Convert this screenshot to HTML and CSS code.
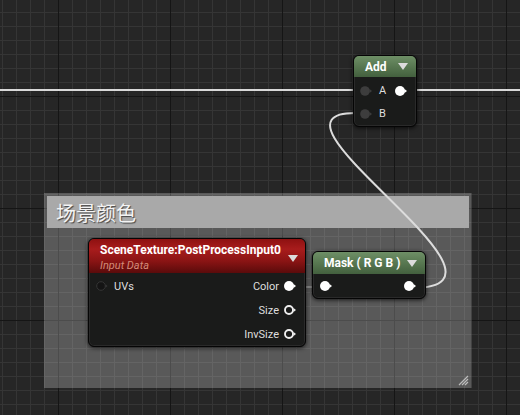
FILE: index.html
```html
<!DOCTYPE html>
<html>
<head>
<meta charset="utf-8">
<link rel="stylesheet" href="styles.css">
</head>
<body>
<div class="graph">
  <div class="comment">
    <div class="comment-header">场景颜色</div>
    <svg class="grip" width="12" height="12" viewBox="0 0 12 12">
      <path d="M11 2 L2 11 M11 5 L5 11 M11 8 L8 11" stroke="#bdbdbd" stroke-width="1.2" fill="none"/>
    </svg>
  </div>

  <svg class="wires" width="520" height="415" viewBox="0 0 520 415">
    <path d="M0 90 L356 90" stroke="#d9d9d9" stroke-width="2" fill="none"/>
    <path d="M404 90 L520 90" stroke="#d9d9d9" stroke-width="2" fill="none"/>
    <path d="M412 288 C 542 288, 245 113, 355 113" stroke="#dcdcdc" stroke-width="2" fill="none"/>
    <path d="M292 287 L325 287" stroke="#bcbcbc" stroke-width="1" fill="none"/>
  </svg>

  <div class="node node-add">
    <div class="node-head head-green">
      <span class="title">Add</span>
      <span class="drop"></span>
    </div>
    <div class="node-body">
      <div class="row">
        <div class="pin-in">
          <svg class="pin" width="14" height="12" viewBox="0 0 14 12"><circle cx="6" cy="6" r="4.8" fill="#3d3d3d"/><path d="M10.5 4 L13 6 L10.5 8Z" fill="#3d3d3d"/></svg>
          <span class="label">A</span>
        </div>
        <svg class="pin" width="14" height="12" viewBox="0 0 14 12"><circle cx="6" cy="6" r="5" fill="#ffffff"/><path d="M10.5 4 L13 6 L10.5 8Z" fill="#ffffff"/></svg>
      </div>
      <div class="row">
        <div class="pin-in">
          <svg class="pin" width="14" height="12" viewBox="0 0 14 12"><circle cx="6" cy="6" r="4.8" fill="#3d3d3d"/><path d="M10.5 4 L13 6 L10.5 8Z" fill="#3d3d3d"/></svg>
          <span class="label">B</span>
        </div>
      </div>
    </div>
  </div>

  <div class="node node-scene">
    <div class="node-head head-red">
      <div class="titles">
        <span class="title">SceneTexture:PostProcessInput0</span>
        <span class="subtitle">Input Data</span>
      </div>
      <span class="drop"></span>
    </div>
    <div class="node-body">
      <div class="row">
        <div class="pin-in">
          <svg class="pin" width="14" height="12" viewBox="0 0 14 12"><circle cx="6" cy="6" r="4.3" fill="#141414" stroke="#353535" stroke-width="1"/><path d="M10.5 4.2 L12.6 6 L10.5 7.8Z" fill="#353535"/></svg>
          <span class="label">UVs</span>
        </div>
        <div class="pin-out">
          <span class="label">Color</span>
          <svg class="pin" width="14" height="12" viewBox="0 0 14 12"><circle cx="6" cy="6" r="5" fill="#ffffff"/><path d="M10.5 4 L13 6 L10.5 8Z" fill="#ffffff"/></svg>
        </div>
      </div>
      <div class="row row-right">
        <div class="pin-out">
          <span class="label">Size</span>
          <svg class="pin" width="14" height="12" viewBox="0 0 14 12"><circle cx="6" cy="6" r="4" fill="none" stroke="#eeeeee" stroke-width="1.9"/><path d="M10.5 4 L13 6 L10.5 8Z" fill="#eeeeee"/></svg>
        </div>
      </div>
      <div class="row row-right">
        <div class="pin-out">
          <span class="label">InvSize</span>
          <svg class="pin" width="14" height="12" viewBox="0 0 14 12"><circle cx="6" cy="6" r="4" fill="none" stroke="#eeeeee" stroke-width="1.9"/><path d="M10.5 4 L13 6 L10.5 8Z" fill="#eeeeee"/></svg>
        </div>
      </div>
    </div>
  </div>

  <div class="node node-mask">
    <div class="node-head head-green">
      <span class="title">Mask ( R G B )</span>
      <span class="drop"></span>
    </div>
    <div class="node-body">
      <div class="row">
        <svg class="pin" width="14" height="12" viewBox="0 0 14 12"><circle cx="6" cy="6" r="5" fill="#ffffff"/><path d="M10.5 4 L13 6 L10.5 8Z" fill="#ffffff"/></svg>
        <svg class="pin" width="14" height="12" viewBox="0 0 14 12"><circle cx="6" cy="6" r="5" fill="#ffffff"/><path d="M10.5 4 L13 6 L10.5 8Z" fill="#ffffff"/></svg>
      </div>
    </div>
  </div>
</div>
</body>
</html>
```

FILE: styles.css
```css
html, body {
  margin: 0;
  padding: 0;
  background: #262626;
}

.graph {
  position: relative;
  width: 520px;
  height: 415px;
  overflow: hidden;
  font-family: Roboto, "Liberation Sans", sans-serif;
  background-color: #262626;
  background-image:
    linear-gradient(to right, #151515 1px, transparent 1px),
    linear-gradient(to bottom, #151515 1px, transparent 1px),
    linear-gradient(to right, #353535 1px, transparent 1px),
    linear-gradient(to bottom, #353535 1px, transparent 1px);
  background-size: 112px 112px, 112px 112px, 14px 14px, 14px 14px;
  background-position: 58px 0, 0 96px, 2px 0, 0 12px;
}

.comment {
  position: absolute;
  left: 44px;
  top: 193px;
  width: 428px;
  height: 195px;
  box-sizing: border-box;
  padding: 3px 2px 0 3px;
  background: rgba(255, 255, 255, 0.235);
  border-right: 1px solid rgba(0, 0, 0, 0.25);
  z-index: 1;
}

.comment-header {
  height: 32px;
  background: #a9a9a9;
  display: flex;
  align-items: center;
  padding-left: 9px;
  font-family: "Noto Sans CJK SC", "Noto Sans", sans-serif;
  font-size: 20px;
  color: #f4f4f4;
  text-shadow: 1px 1px 1px rgba(0, 0, 0, 0.6);
}

.grip {
  position: absolute;
  right: 2px;
  bottom: 2px;
}

.wires {
  position: absolute;
  left: 0;
  top: 0;
  z-index: 2;
}

.node {
  position: absolute;
  z-index: 3;
  box-sizing: border-box;
  display: flex;
  flex-direction: column;
  background: #1a1b1a;
  border: 1px solid #050505;
  border-radius: 6px;
  overflow: hidden;
  box-shadow: 0 1px 4px rgba(0, 0, 0, 0.75), inset 0 0 0 1px #2a2a2a;
  color: #dddddd;
}

.node-head {
  display: flex;
  align-items: center;
  justify-content: space-between;
  box-sizing: border-box;
}

.head-green {
  background: linear-gradient(to bottom, #6e8f66 0%, #5a7a53 45%, #43603e 100%);
}

.head-red {
  background: linear-gradient(to bottom, #8e1111 0%, #a81c1c 30%, #8a1414 65%, #5a0b0b 100%);
  align-items: flex-start;
}

.title {
  font-weight: bold;
  font-size: 12px;
  color: #ffffff;
  white-space: nowrap;
}

.titles {
  display: flex;
  flex-direction: column;
}

.subtitle {
  font-style: italic;
  font-size: 11px;
  color: #d48a78;
  margin-top: 2px;
}

.drop {
  width: 0;
  height: 0;
  border-left: 5px solid transparent;
  border-right: 5px solid transparent;
  border-top: 7px solid #dcdcdc;
}

.node-body {
  display: flex;
  flex-direction: column;
  flex: 1;
}

.row {
  display: flex;
  align-items: center;
  justify-content: space-between;
}

.row-right {
  justify-content: flex-end;
}

.pin-in, .pin-out {
  display: flex;
  align-items: center;
}

.pin {
  display: block;
  flex: none;
}

.label {
  font-size: 11px;
  color: #dedede;
  line-height: 1;
}

/* Add node */
.node-add {
  left: 353px;
  top: 55px;
  width: 64px;
  height: 72px;
}
.node-add .node-head {
  height: 21px;
  padding: 0 8px 0 11px;
}
.node-add .node-body {
  padding: 2px 8px 0 5px;
}
.node-add .row {
  height: 23px;
}
.node-add .pin-in .label {
  margin-left: 6px;
}

/* SceneTexture node */
.node-scene {
  left: 88px;
  top: 238px;
  width: 218px;
  height: 109px;
}
.node-scene .node-head {
  height: 35px;
  padding: 4px 7px 0 11px;
}
.node-scene .drop {
  margin-top: 12px;
}
.node-scene .node-body {
  padding: 1px 8px 0 6px;
}
.node-scene .row {
  height: 24px;
}
.node-scene .pin-in .label {
  margin-left: 5px;
}
.node-scene .pin-out .label {
  margin-right: 4px;
}

/* Mask node */
.node-mask {
  left: 312px;
  top: 251px;
  width: 114px;
  height: 48px;
}
.node-mask .node-head {
  height: 22px;
  padding: 0 8px 0 11px;
}
.node-mask .node-body {
  padding: 0 8px 0 6px;
  justify-content: center;
}
.node-mask .row {
  height: 24px;
}
```
